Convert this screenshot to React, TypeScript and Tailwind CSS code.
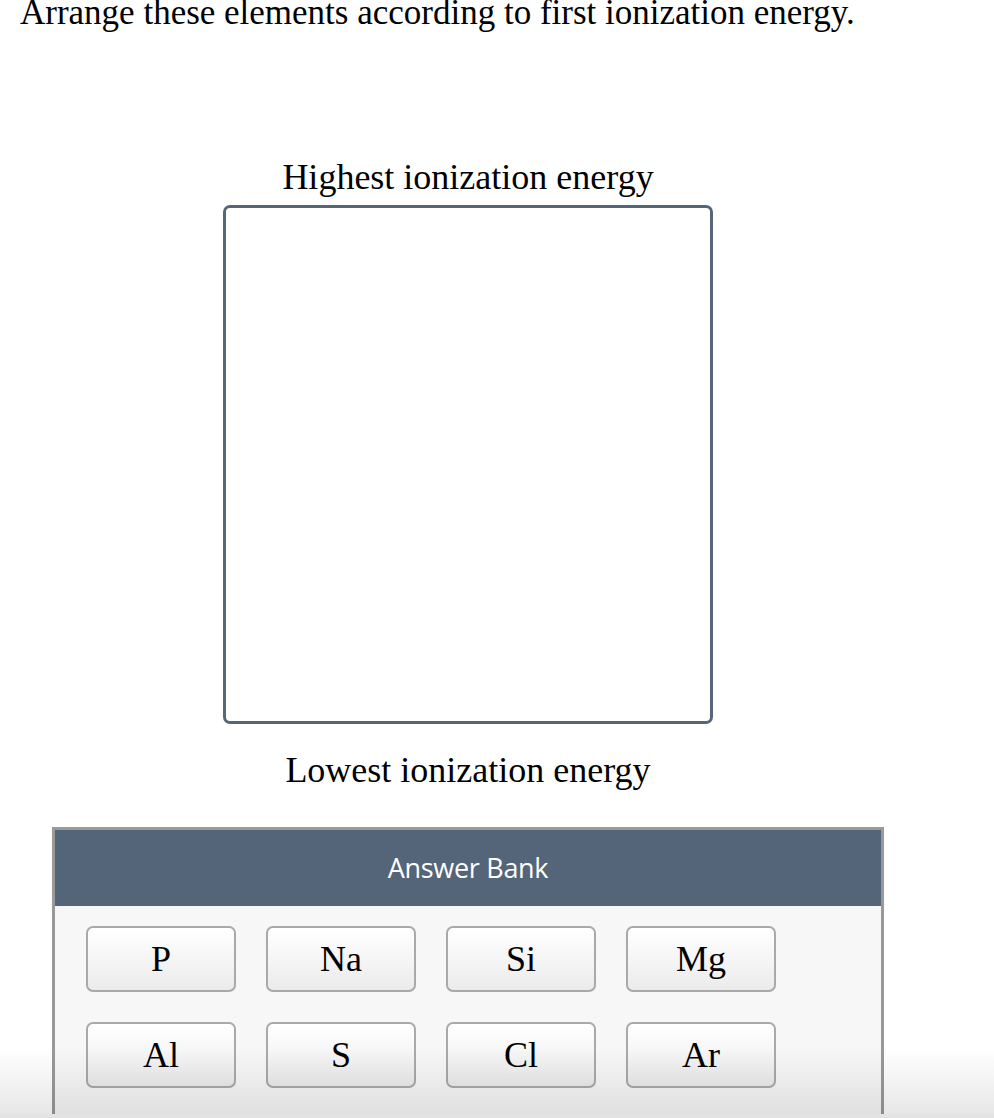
const bank = [
  ['P', 'Na', 'Si', 'Mg'],
  ['Al', 'S', 'Cl', 'Ar'],
]

function Tile({ label }: { label: string }) {
  return (
    <button
      type="button"
      className="flex h-[66px] w-[150px] items-center justify-center rounded-[7px] border-2 border-[#a9a9a9] bg-gradient-to-b from-white to-[#ebebeb] text-[36px] leading-none text-black"
    >
      {label}
    </button>
  )
}

export default function App() {
  return (
    <div className="relative h-[1118px] w-[994px] overflow-hidden bg-white font-['Liberation_Serif','Times_New_Roman',serif] text-black">
      <h1 className="ml-[20px] mt-[-5px] text-[35px] font-normal leading-none whitespace-nowrap">
        Arrange these elements according to first ionization energy.
      </h1>

      <div className="ml-[223px] mt-[129px] flex w-[490px] flex-col items-center">
        <p className="text-[36px] leading-none whitespace-nowrap">Highest ionization energy</p>
        <div className="mt-[10px] h-[519px] w-[490px] rounded-[7px] border-[3px] border-[#566679] bg-white" />
        <p className="mt-[28px] text-[36px] leading-none whitespace-nowrap">Lowest ionization energy</p>
      </div>

      <div className="ml-[52px] mt-[39px] w-[832px] border-[3px] border-b-0 border-[#999999] bg-[#f7f7f7]">
        <div className="flex h-[76px] items-center justify-center bg-[#546479]">
          <span className="font-['Open_Sans',sans-serif] text-[27px] tracking-[-0.3px] text-white">Answer Bank</span>
        </div>
        <div className="flex flex-col gap-[30px] px-[31px] pt-[20px] pb-[40px]">
          {bank.map((row, i) => (
            <div key={i} className="flex gap-[30px]">
              {row.map((el) => (
                <Tile key={el} label={el} />
              ))}
            </div>
          ))}
        </div>
      </div>

      {/* fade along the bottom edge of the page */}
      <div className="pointer-events-none absolute inset-x-0 bottom-0 h-[70px] bg-gradient-to-b from-transparent to-black/10" />
      <div className="pointer-events-none absolute inset-x-0 bottom-0 h-[4px] bg-[#e3e3e3]" />
    </div>
  )
}
